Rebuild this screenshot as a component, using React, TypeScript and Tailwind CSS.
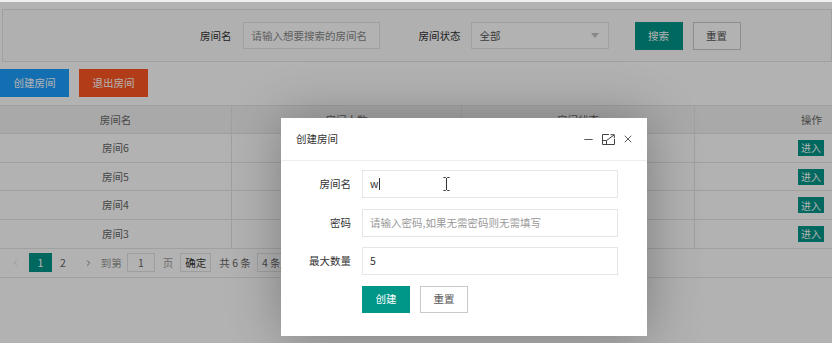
import { X, Minus, ChevronLeft, ChevronRight } from 'lucide-react'

const rooms = ['房间6', '房间5', '房间4', '房间3']

const App = () => {
  return (
    <div className="relative w-[832px] h-[343px] overflow-hidden bg-white font-['Noto_Sans_CJK_SC','Noto_Sans',sans-serif] text-[10.5px] text-[#666]">
      {/* 页面主体 */}
      <div className="h-[2px] bg-[#f0f0f0]"></div>
      <div className="ml-[2px] mt-[7px] h-[53px] border border-[#e6e6e6] bg-[#fcfcfc] flex items-center pl-[197px]">
        <span className="text-[#333]">房间名</span>
        <div className="ml-[11px] w-[137px] h-[27px] border border-[#e6e6e6] bg-white flex items-center pl-[8px] text-[#888]">
          请输入想要搜索的房间名
        </div>
        <span className="ml-[39px] text-[#333]">房间状态</span>
        <div className="ml-[10px] w-[138px] h-[27px] border border-[#e6e6e6] bg-white flex items-center justify-between px-[8px] text-[#555]">
          <span>全部</span>
          <span className="w-0 h-0 border-x-[4px] border-x-transparent border-t-[5px] border-t-[#c2c2c2] mr-[1px]"></span>
        </div>
        <button className="ml-[26px] w-[48px] h-[28px] bg-[#009688] text-white">搜索</button>
        <button className="ml-[10px] w-[48px] h-[28px] border border-[#c9c9c9] bg-white text-[#555]">重置</button>
      </div>

      <div className="mt-[7px] flex gap-[10px]">
        <button className="w-[69px] h-[28px] bg-[#1e9fff] text-white">创建房间</button>
        <button className="w-[69px] h-[28px] bg-[#ff5722] text-white">退出房间</button>
      </div>

      <div className="mt-[8px] border-t border-[#e6e6e6]">
        <div className="flex h-[28px] bg-[#f2f2f2] border-b border-[#e6e6e6] items-center">
          <div className="w-[232px] h-full border-r border-[#e6e6e6] flex items-center justify-center">房间名</div>
          <div className="w-[230px] h-full border-r border-[#e6e6e6] flex items-center justify-center">房间人数</div>
          <div className="w-[233px] h-full border-r border-[#e6e6e6] flex items-center justify-center">房间状态</div>
          <div className="flex-1 h-full flex items-center justify-end pr-[10px]">操作</div>
        </div>
        {rooms.map((r) => (
          <div key={r} className="flex h-[28.7px] border-b border-[#e6e6e6] items-center">
            <div className="w-[232px] h-full border-r border-[#e6e6e6] flex items-center justify-center">{r}</div>
            <div className="w-[230px] h-full border-r border-[#e6e6e6]"></div>
            <div className="w-[233px] h-full border-r border-[#e6e6e6]"></div>
            <div className="flex-1 h-full flex items-center justify-end pr-[8px]">
              <span className="w-[26px] h-[16px] bg-[#009688] text-white text-[10px] flex items-center justify-center">进入</span>
            </div>
          </div>
        ))}
        <div className="h-[29px] border-b border-[#e6e6e6] flex items-center text-[#666]">
          <ChevronLeft className="ml-[11px] w-[9px] h-[12px] text-[#d2d2d2]" strokeWidth={2} />
          <span className="ml-[9px] w-[23px] h-[19px] bg-[#009688] text-white flex items-center justify-center">1</span>
          <span className="ml-[8px]">2</span>
          <ChevronRight className="ml-[18px] w-[9px] h-[12px] text-[#555]" strokeWidth={2} />
          <span className="ml-[8px] text-[#999]">到第</span>
          <span className="ml-[5px] w-[28px] h-[19px] border border-[#e2e2e2] bg-white flex items-center justify-center">1</span>
          <span className="ml-[8px] text-[#999]">页</span>
          <span className="ml-[7px] w-[31px] h-[19px] border border-[#e2e2e2] bg-white text-[#333] flex items-center justify-center">确定</span>
          <span className="ml-[8px]">共 6 条</span>
          <span className="ml-[6px] w-[62px] h-[19px] border border-[#e2e2e2] bg-white flex items-center pl-[4px]">4 条/页</span>
        </div>
      </div>

      {/* 遮罩 */}
      <div className="absolute inset-x-0 bottom-0 top-[2px] bg-black/30"></div>

      {/* 弹层 */}
      <div className="absolute left-[281px] top-[118px] w-[366px] h-[218px] bg-white shadow-[1px_1px_50px_rgba(0,0,0,0.3)]">
        <div className="h-[43px] border-b border-[#eee] flex items-center pl-[15px] pr-[13px] text-[#333]">
          <span>创建房间</span>
          <div className="ml-auto flex items-center gap-[7px] text-[#333]">
            <Minus className="w-[13px] h-[13px]" strokeWidth={1.5} />
            <svg width="13" height="11" viewBox="0 0 13 11" fill="none" stroke="#444" strokeWidth="1">
              <path d="M7 0.5 H0.5 V10.5 H12.5 V5" />
              <path d="M0.5 6.5 H4.5 V10.5" />
              <path d="M4.5 6.5 L12 1" />
              <path d="M8.5 0.7 H12.3 V4.3" />
            </svg>
            <X className="w-[12px] h-[12px]" strokeWidth={1.6} />
          </div>
        </div>
        <div className="pt-[9px] flex flex-col gap-[10.5px]">
          <div className="flex items-center">
            <span className="w-[70px] text-right text-[#333]">房间名</span>
            <div className="relative ml-[11px] w-[256px] h-[28px] border border-[#e6e6e6] flex items-center pl-[7px] text-[#333]">
              w<span className="ml-[1px] w-px h-[12px] bg-[#333]"></span>
              <svg className="absolute left-[80px] top-[6px]" width="7" height="14" viewBox="0 0 7 14" fill="none" stroke="#333" strokeWidth="1">
                <path d="M0.5 0.5 H2.5 M4.5 0.5 H6.5 M3.5 1 V13 M0.5 13.5 H2.5 M4.5 13.5 H6.5 M2.5 0.5 L3.5 1.5 L4.5 0.5 M2.5 13.5 L3.5 12.5 L4.5 13.5" />
              </svg>
            </div>
          </div>
          <div className="flex items-center">
            <span className="w-[70px] text-right text-[#333]">密码</span>
            <div className="ml-[11px] w-[256px] h-[28px] border border-[#e6e6e6] flex items-center pl-[7px] text-[#999]">
              请输入密码,如果无需密码则无需填写
            </div>
          </div>
          <div className="flex items-center">
            <span className="w-[70px] text-right text-[#333]">最大数量</span>
            <div className="ml-[11px] w-[256px] h-[28px] border border-[#e6e6e6] flex items-center pl-[7px] text-[#333]">
              5
            </div>
          </div>
          <div className="flex items-center pl-[81px] gap-[10px]">
            <button className="w-[48px] h-[27px] bg-[#009688] text-white">创建</button>
            <button className="w-[48px] h-[27px] border border-[#c9c9c9] bg-white text-[#555]">重置</button>
          </div>
        </div>
      </div>
    </div>
  )
}

export default App
